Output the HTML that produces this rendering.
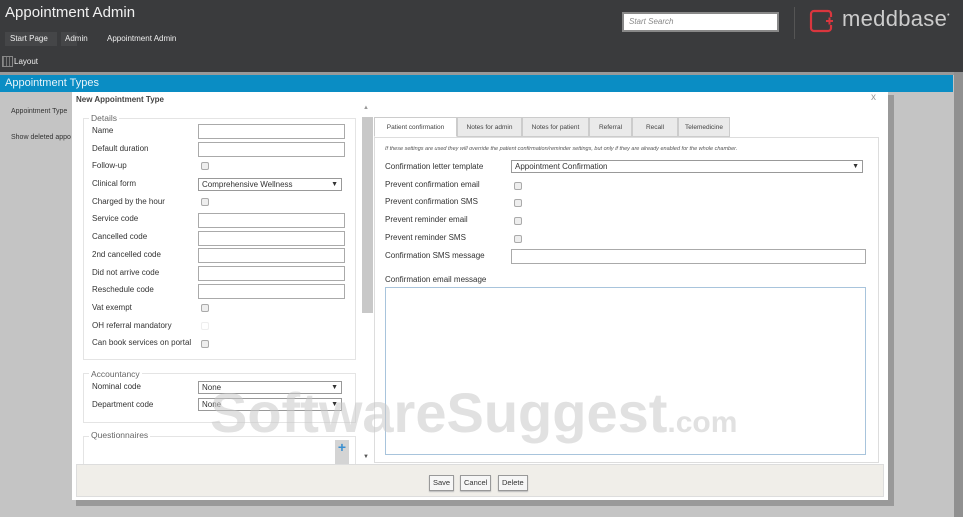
<!DOCTYPE html>
<html><head><meta charset="utf-8"><style>
*{box-sizing:border-box;margin:0;padding:0}
body{width:963px;height:517px;overflow:hidden;background:#c4c4c4;font-family:"Liberation Sans",sans-serif;position:relative;color:#333}
.a{position:absolute}
.top{left:0;top:0;width:963px;height:72px;background:#3a3b3d}
.lbl{position:absolute;font-size:8px;color:#333;white-space:nowrap}
.inp{position:absolute;height:15px;border:1px solid #aaa;background:#fff}
.cb{position:absolute;width:8px;height:8px;border:1px solid #aaa;border-radius:2px;background:#eee}
.sel{position:absolute;height:13px;border:1px solid #999;background:#fff;font-size:8px;padding-left:3px;line-height:11px}
.sel:after{content:"▼";position:absolute;right:3px;top:0;font-size:7px}
.tab{position:absolute;top:117px;height:20px;border:1px solid #ccc;background:#eaeaea;font-size:6.5px;text-align:center;line-height:19px;color:#444}
.btn{position:absolute;top:475px;height:16px;border:1px solid #999;background:#f6f6f6;font-size:7.5px;line-height:14px;padding:0 3px;box-shadow:0 1px 1px #bbb}
</style></head><body>
<div class="a top"></div>
<div class="a" style="left:5px;top:4px;color:#f0f0f0;font-size:15px">Appointment Admin</div>
<div class="a" style="left:5px;top:32px;width:52px;height:14px;background:#454648"></div>
<div class="a" style="left:10px;top:34px;color:#eee;font-size:8px">Start Page</div>
<div class="a" style="left:61px;top:32px;width:16px;height:14px;background:#454648"></div>
<div class="a" style="left:65px;top:34px;color:#eee;font-size:8px">Admin</div>
<div class="a" style="left:107px;top:34px;color:#eee;font-size:8px">Appointment Admin</div>
<div class="a" style="left:2px;top:56px;width:11px;height:11px;border:1px solid #888;background:repeating-linear-gradient(90deg,#777 0 1px,transparent 1px 3px)"></div>
<div class="a" style="left:14px;top:57px;color:#eee;font-size:8px">Layout</div>
<div class="a" style="left:622px;top:12px;width:157px;height:20px;border:2px solid #888;background:#fff;font-size:8px;font-style:italic;color:#888;padding:3px 5px">Start Search</div>
<div class="a" style="left:794px;top:7px;width:1px;height:32px;background:#555"></div>
<svg class="a" style="left:809px;top:9px" width="28" height="24"><rect x="2" y="2" width="20" height="20" rx="3" fill="none" stroke="#d9363e" stroke-width="2.2"/><rect x="19" y="8" width="6" height="8" fill="#3a3b3d"/><path d="M17 12h7M20.5 8.5v7" stroke="#d9363e" stroke-width="2"/></svg>
<div class="a" style="left:842px;top:6px;color:#ccc;font-size:22px;letter-spacing:0.3px">meddbase<span style="font-size:7px;vertical-align:top;position:relative;top:6px">•</span></div>
<div class="a" style="left:0;top:72px;width:963px;height:3px;background:#999"></div>
<div class="a" style="left:0;top:75px;width:953px;height:17px;background:#0a8dc4;color:#e8f4fa;font-size:11px;padding:2px 5px">Appointment Types</div>
<div class="a" style="left:954px;top:72px;width:9px;height:445px;background:#909090"></div>
<div class="a" style="left:11px;top:108px;font-size:7px">Appointment Type</div>
<div class="a" style="left:11px;top:134px;font-size:7px">Show deleted appo</div>
<div class="a" style="left:76px;top:95px;width:818px;height:411px;background:#999"></div>
<div class="a" style="left:72px;top:92px;width:816px;height:408px;background:#fff"></div>
<div class="a" style="left:76px;top:95px;font-size:8px;font-weight:bold;color:#444">New Appointment Type</div>
<div class="a" style="left:871px;top:92px;font-size:10px;color:#999">x</div>
<div class="a" style="left:83px;top:118px;width:273px;height:242px;border:1px solid #e4e4e4"></div>
<div class="a" style="left:89px;top:113px;background:#fff;font-size:8.5px;color:#666;padding:0 2px">Details</div>
<div class="lbl" style="left:92px;top:126px">Name</div><div class="inp" style="left:198px;top:124px;width:147px"></div>
<div class="lbl" style="left:92px;top:144px">Default duration</div><div class="inp" style="left:198px;top:142px;width:147px"></div>
<div class="lbl" style="left:92px;top:161px">Follow-up</div><div class="cb" style="left:201px;top:162px"></div>
<div class="lbl" style="left:92px;top:179px">Clinical form</div><div class="sel" style="left:198px;top:178px;width:144px">Comprehensive Wellness</div>
<div class="lbl" style="left:92px;top:197px">Charged by the hour</div><div class="cb" style="left:201px;top:198px"></div>
<div class="lbl" style="left:92px;top:214px">Service code</div><div class="inp" style="left:198px;top:213px;width:147px"></div>
<div class="lbl" style="left:92px;top:232px">Cancelled code</div><div class="inp" style="left:198px;top:231px;width:147px"></div>
<div class="lbl" style="left:92px;top:250px">2nd cancelled code</div><div class="inp" style="left:198px;top:248px;width:147px"></div>
<div class="lbl" style="left:92px;top:268px">Did not arrive code</div><div class="inp" style="left:198px;top:266px;width:147px"></div>
<div class="lbl" style="left:92px;top:285px">Reschedule code</div><div class="inp" style="left:198px;top:284px;width:147px"></div>
<div class="lbl" style="left:92px;top:303px">Vat exempt</div><div class="cb" style="left:201px;top:304px"></div>
<div class="lbl" style="left:92px;top:321px">OH referral mandatory</div><div class="cb" style="left:201px;top:322px;background:#fff;border-color:#eee"></div>
<div class="lbl" style="left:92px;top:338px">Can book services on portal</div><div class="cb" style="left:201px;top:340px"></div>
<div class="a" style="left:83px;top:373px;width:273px;height:50px;border:1px solid #e4e4e4"></div>
<div class="a" style="left:89px;top:369px;background:#fff;font-size:8.5px;color:#666;padding:0 2px">Accountancy</div>
<div class="lbl" style="left:92px;top:382px">Nominal code</div><div class="sel" style="left:198px;top:381px;width:144px">None</div>
<div class="lbl" style="left:92px;top:400px">Department code</div><div class="sel" style="left:198px;top:398px;width:144px">None</div>
<div class="a" style="left:83px;top:436px;width:273px;height:40px;border:1px solid #e4e4e4"></div>
<div class="a" style="left:89px;top:430px;background:#fff;font-size:8.5px;color:#666;padding:0 2px">Questionnaires</div>
<div class="a" style="left:335px;top:440px;width:14px;height:25px;background:#d4d4d4;color:#3a8fd0;font-size:14px;font-weight:bold;text-align:center;line-height:14px">+</div>
<div class="a" style="left:363px;top:105px;font-size:6px;color:#999">▲</div>
<div class="a" style="left:362px;top:117px;width:11px;height:196px;background:#c8c8c8"></div>
<div class="a" style="left:363px;top:454px;font-size:6px;color:#555">▼</div>
<div class="a" style="left:374px;top:137px;width:505px;height:326px;border:1px solid #ddd"></div>
<div class="tab" style="left:374px;width:83px;background:#fff;border-bottom-color:#fff">Patient confirmation</div>
<div class="tab" style="left:457px;width:65px">Notes for admin</div>
<div class="tab" style="left:522px;width:67px">Notes for patient</div>
<div class="tab" style="left:589px;width:43px">Referral</div>
<div class="tab" style="left:632px;width:46px">Recall</div>
<div class="tab" style="left:678px;width:52px">Telemedicine</div>
<div class="a" style="left:385px;top:146px;font-size:5.5px;font-style:italic;color:#555">If these settings are used they will override the patient confirmation/reminder settings, but only if they are already enabled for the whole chamber.</div>
<div class="lbl" style="left:385px;top:162px">Confirmation letter template</div><div class="sel" style="left:511px;top:160px;width:352px">Appointment Confirmation</div>
<div class="lbl" style="left:385px;top:180px">Prevent confirmation email</div><div class="cb" style="left:514px;top:182px"></div>
<div class="lbl" style="left:385px;top:197px">Prevent confirmation SMS</div><div class="cb" style="left:514px;top:199px"></div>
<div class="lbl" style="left:385px;top:215px">Prevent reminder email</div><div class="cb" style="left:514px;top:217px"></div>
<div class="lbl" style="left:385px;top:233px">Prevent reminder SMS</div><div class="cb" style="left:514px;top:235px"></div>
<div class="lbl" style="left:385px;top:251px">Confirmation SMS message</div><div class="inp" style="left:511px;top:249px;width:355px"></div>
<div class="lbl" style="left:385px;top:275px">Confirmation email message</div>
<div class="a" style="left:385px;top:287px;width:481px;height:168px;border:1px solid #a8c4dc"></div>
<div class="a" style="left:76px;top:464px;width:808px;height:33px;background:#f0eee9;border:1px solid #ddd"></div>
<div class="btn" style="left:429px">Save</div>
<div class="btn" style="left:460px">Cancel</div>
<div class="btn" style="left:498px">Delete</div>
<div class="a" style="left:210px;top:380px;font-size:56px;font-weight:bold;color:rgba(200,200,200,0.55);letter-spacing:0px;white-space:nowrap">SoftwareSuggest<span style="font-size:30px">.com</span></div>
</body></html>
